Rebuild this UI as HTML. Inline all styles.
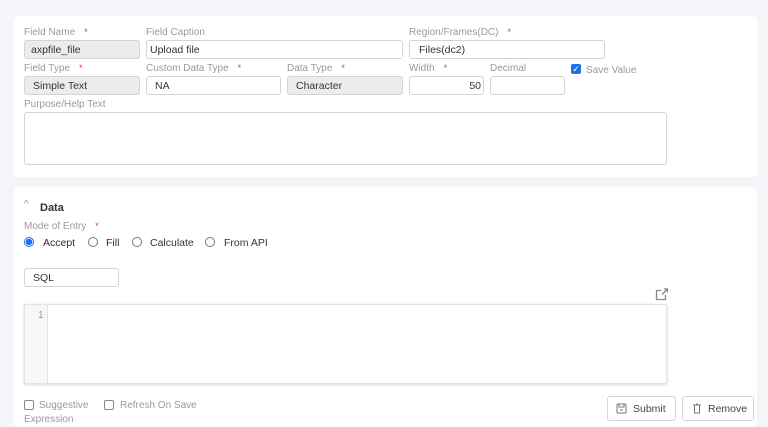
<!DOCTYPE html>
<html><head><style>
*{box-sizing:border-box;margin:0;padding:0}
body{width:768px;height:423px;overflow:hidden;background:#f4f5f9;font-family:"Liberation Sans",sans-serif;position:relative}
.card{position:absolute;background:#fff;border-radius:5px}
.lbl{position:absolute;font-size:10px;color:#9a9a9a;white-space:nowrap}
.lbl b{color:#e53935;font-weight:normal;margin-left:9px;font-size:9px;vertical-align:top}
.in{position:absolute;border:1px solid #d4d4d4;border-radius:3px;background:#fff;font-size:10.5px;color:#333;height:19px;line-height:18px;padding:0 6px;white-space:nowrap}
.g{background:#ececec}
.t{position:absolute;font-size:10.5px;color:#333;white-space:nowrap}
.rad{position:absolute;width:10px;height:10px;border:1px solid #777;border-radius:50%}
.cb{position:absolute;width:10px;height:10px;border:1px solid #888;border-radius:2px}
.btn{position:absolute;border:1px solid #d6d6d6;border-radius:3px;background:#fff;font-size:10.5px;color:#444;height:25px;line-height:24px;padding-left:25px}
</style></head><body>
<div class="card" style="left:14px;top:16px;width:744px;height:161px"></div>
<div class="card" style="left:14px;top:187px;width:743px;height:240px"></div>

<div class="lbl" style="left:24px;top:27px">Field Name<b>*</b></div>
<div class="in g" style="left:24px;top:40px;width:116px">axpfile_file</div>
<div class="lbl" style="left:146px;top:27px">Field Caption</div>
<div class="in" style="left:146px;top:40px;width:257px;padding-left:3px">Upload file</div>
<div class="lbl" style="left:409px;top:27px">Region/Frames(DC)<b>*</b></div>
<div class="in" style="left:409px;top:40px;width:196px;padding-left:9px">Files(dc2)</div>

<div class="lbl" style="left:24px;top:63px">Field Type<b>*</b></div>
<div class="in g" style="left:24px;top:76px;width:116px;padding-left:8px">Simple Text</div>
<div class="lbl" style="left:146px;top:63px">Custom Data Type<b>*</b></div>
<div class="in" style="left:146px;top:76px;width:135px;padding-left:8px">NA</div>
<div class="lbl" style="left:287px;top:63px">Data Type<b>*</b></div>
<div class="in g" style="left:287px;top:76px;width:116px;padding-left:8px">Character</div>
<div class="lbl" style="left:409px;top:63px">Width<b>*</b></div>
<div class="in" style="left:409px;top:76px;width:75px;text-align:right;padding-right:2px">50</div>
<div class="lbl" style="left:490px;top:63px">Decimal</div>
<div class="in" style="left:490px;top:76px;width:75px"></div>
<div style="position:absolute;left:571px;top:64px;width:10px;height:10px;background:#1a73e8;border-radius:2px;color:#fff;font-size:9px;line-height:10px;text-align:center">✓</div>
<div class="lbl" style="left:586px;top:65px">Save Value</div>

<div class="lbl" style="left:24px;top:99px">Purpose/Help Text</div>
<div class="in" style="left:24px;top:112px;width:643px;height:53px"></div>

<div class="t" style="left:24px;top:199px;color:#999;font-size:10px">^</div>
<div class="t" style="left:40px;top:202px;font-weight:bold;font-size:11px">Data</div>
<div class="lbl" style="left:24px;top:221px">Mode of Entry<b>*</b></div>
<div style="position:absolute;left:24px;top:237px;width:10px;height:10px;border-radius:50%;border:1px solid #1a73e8;background:radial-gradient(#1a73e8 0 3px,#fff 3.5px)"></div>
<div class="t" style="left:43px;top:237px">Accept</div>
<div class="rad" style="left:88px;top:237px"></div>
<div class="t" style="left:106px;top:237px">Fill</div>
<div class="rad" style="left:132px;top:237px"></div>
<div class="t" style="left:150px;top:237px">Calculate</div>
<div class="rad" style="left:205px;top:237px"></div>
<div class="t" style="left:224px;top:237px">From API</div>

<div class="in" style="left:24px;top:268px;width:95px;padding-left:8px">SQL</div>
<svg style="position:absolute;left:655px;top:288px" width="14" height="13" viewBox="0 0 14 13" fill="none" stroke="#888" stroke-width="1.3"><path d="M6 2.5H1.5v9h9V7"/><path d="M7 6.5L12.5 1M9 1h3.5v3.5"/></svg>
<div style="position:absolute;left:24px;top:304px;width:643px;height:80px;border:1px solid #e2e2e2;box-shadow:0 1px 3px rgba(0,0,0,.15);background:#fff"></div>
<div style="position:absolute;left:25px;top:305px;width:23px;height:78px;background:#f7f7f7;border-right:1px solid #e4e4e4"></div>
<div class="t" style="left:38px;top:310px;color:#999;font-size:10px">1</div>

<div class="cb" style="left:24px;top:400px"></div>
<div class="lbl" style="left:39px;top:400px">Suggestive</div>
<div class="lbl" style="left:24px;top:414px">Expression</div>
<div class="cb" style="left:104px;top:400px"></div>
<div class="lbl" style="left:120px;top:400px">Refresh On Save</div>

<div class="btn" style="left:607px;top:396px;width:69px">Submit</div>
<svg style="position:absolute;left:616px;top:403px" width="11" height="11" viewBox="0 0 11 11" fill="none" stroke="#777"><rect x="1" y="1" width="9" height="9" rx="1"/><path d="M3 1v3h5V1M4 7h3"/></svg>
<div class="btn" style="left:682px;top:396px;width:72px">Remove</div>
<svg style="position:absolute;left:692px;top:403px" width="10" height="11" viewBox="0 0 10 11" fill="none" stroke="#777"><path d="M1 2h8M2.5 2v8h5V2M4 1h2"/></svg>
</body></html>
